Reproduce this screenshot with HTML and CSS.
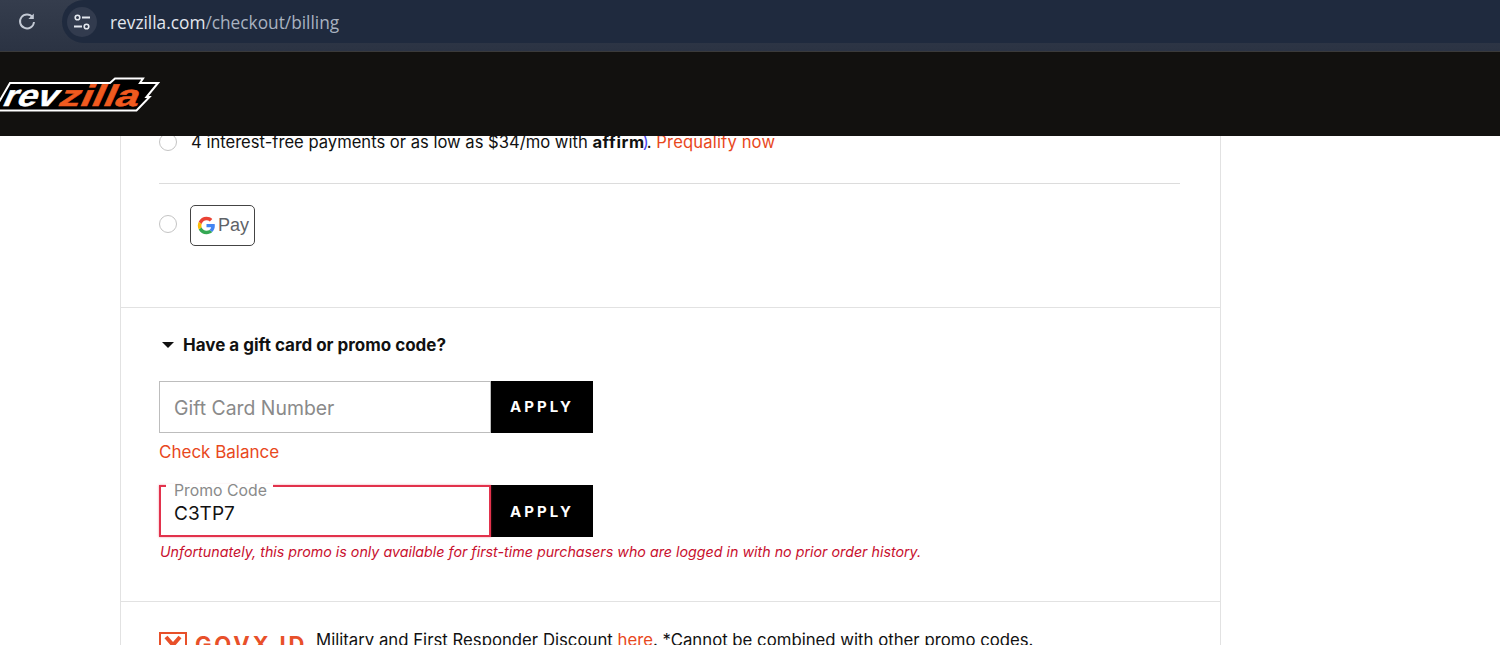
FILE: index.html
```html
<!DOCTYPE html>
<html lang="en">
<head>
<meta charset="utf-8">
<title>RevZilla checkout billing</title>
<link rel="stylesheet" href="styles.css">
</head>
<body>
<div class="browser-bar">
  <svg class="reload" viewBox="0 0 20 20" width="20" height="20"><path d="M15.6 6.200A7 7 0 1 0 17 11" fill="none" stroke="#c3c9d4" stroke-width="1.900"/><path d="M16.800 2.600v5.400h-5.400z" fill="#c3c9d4"/></svg>
  <div class="omnibox">
    <span class="site-info">
      <svg viewBox="0 0 20 20" width="20" height="20"><circle cx="5.500" cy="5.500" r="2.300" fill="none" stroke="#e4e8ef" stroke-width="1.600"/><path d="M10 5.500h8M2 14.500h8" stroke="#e4e8ef" stroke-width="1.800"/><circle cx="14.500" cy="14.500" r="2.300" fill="none" stroke="#e4e8ef" stroke-width="1.600"/></svg>
    </span>
    <span class="url"><span class="url-host">revzilla.com</span>/checkout/billing</span>
  </div>
</div>

<header class="site-header">
  <svg class="logo" viewBox="0 0 160 36" width="160" height="36">
    <polygon class="logo-outline" points="-6,33.500 10,6 110,6 115,1.500 143,1.500 140,6 158,6 146.500,20 149.500,20 136.500,33.500"/>
    <text class="logo-rev" transform="translate(1 28.500) skewX(-24)" textLength="54" lengthAdjust="spacingAndGlyphs">rev</text>
    <text class="logo-zilla" transform="translate(57 28.500) skewX(-24)" textLength="79" lengthAdjust="spacingAndGlyphs">zilla</text>
  </svg>
</header>

<main class="card">
  <section class="payment">
    <div class="pay-row pay-row-first">
      <span class="radio"></span>
      <p class="pay-text">4 interest-free payments or as low as $34/mo with <b class="affirm">affirm</b><span class="affirm-arc">)</span>. <a class="link prequalify">Prequalify now</a></p>
    </div>
    <hr class="rule">
    <div class="pay-row pay-row-gpay">
      <span class="radio radio-gpay"></span>
      <span class="gpay">
        <svg viewBox="0 0 48 48" width="19" height="19"><path fill="#4285f4" d="M45 24.500c0-1.600-.1-3-.4-4.500H24v8.500h11.800c-.5 2.700-2 5-4.400 6.600l7 5.400C42.500 36.700 45 31.100 45 24.500z"/><path fill="#34a853" d="M24 46c5.900 0 10.900-2 14.500-5.400l-7-5.400c-2 1.300-4.500 2.100-7.500 2.100-5.700 0-10.600-3.900-12.300-9.100l-7.300 5.600C7.900 41 15.400 46 24 46z"/><path fill="#fbbc05" d="M11.700 28.700c-.9-2.700-.9-5.600 0-8.400l-7.300-5.600c-3.100 6.100-3.100 13.400 0 19.600z"/><path fill="#ea4335" d="M24 10.800c3.200 0 6.100 1.100 8.400 3.300l6.300-6.300C34.900 4.200 29.900 2 24 2 15.400 2 7.900 7 4.400 14.700l7.300 5.600c1.700-5.300 6.600-9.500 12.300-9.500z"/></svg>
        <span class="gpay-text">Pay</span>
      </span>
    </div>
  </section>

  <section class="promo">
    <div class="promo-title"><span class="caret"></span>Have a gift card or promo code?</div>
    <div class="field-row">
      <div class="field"><span class="placeholder">Gift Card Number</span></div>
      <button class="apply">APPLY</button>
    </div>
    <a class="link check-balance">Check Balance</a>
    <div class="field-row">
      <div class="field field-error">
        <span class="float-label">Promo Code</span>
        <span class="value">C3TP7</span>
      </div>
      <button class="apply apply-promo">APPLY</button>
    </div>
    <p class="error-text">Unfortunately, this promo is only available for first-time purchasers who are logged in with no prior order history.</p>
  </section>

  <section class="govx">
    <span class="govx-mark">
      <svg viewBox="0 0 28 28" width="28" height="28"><rect x="1" y="1" width="26" height="26" fill="none" stroke="#e8502a" stroke-width="2"/><path d="M7 5l14 16M21 5L7 21" stroke="#e8502a" stroke-width="4"/></svg>
    </span>
    <span class="govx-name">GOVX ID</span>
    <span class="govx-text">Military and First Responder Discount <a class="link">here</a>. *Cannot be combined with other promo codes.</span>
  </section>
</main>
</body>
</html>
```

FILE: styles.css
```css
* { box-sizing: border-box; }

html, body {
  margin: 0;
  height: 100%;
  overflow: hidden;
  background: #fff;
}

body {
  font-family: "Inter", "Liberation Sans", sans-serif;
  color: #111;
}

.browser-bar {
  height: 52px;
  display: flex;
  align-items: flex-start;
  background: linear-gradient(#353d4d, #2b3343);
  border-bottom: 1px solid #3a3a3a;
}

.reload {
  margin: 11px 0 0 17px;
  flex: none;
}

.omnibox {
  flex: 1;
  height: 43px;
  margin-left: 25px;
  padding-left: 5px;
  display: flex;
  align-items: center;
  background: #1f2a3e;
  border-radius: 22px 0 0 22px;
}

.site-info {
  width: 30px;
  height: 30px;
  display: flex;
  align-items: center;
  justify-content: center;
  border-radius: 50%;
  background: #323b4e;
}

.url {
  margin-left: 13px;
  padding-top: 1px;
  font-family: "Open Sans", sans-serif;
  font-size: 17.3px;
  color: #a9b2c0;
}

.url-host { color: #e3e7ee; }

.site-header {
  position: relative;
  z-index: 2;
  height: 84px;
  background: #12110f;
  display: flex;
  align-items: flex-start;
  padding-top: 25px;
}

.logo { display: block; }

.logo-outline {
  fill: #000;
  stroke: #fff;
  stroke-width: 2;
}

.logo-rev, .logo-zilla {
  font-family: "Liberation Sans", sans-serif;
  font-weight: 700;
  font-size: 30px;
  stroke-width: .5;
}

.logo-rev { fill: #fff; stroke: #fff; }
.logo-zilla { fill: #f15a1f; stroke: #f15a1f; }

.card {
  width: 1101px;
  margin-left: 120px;
  margin-top: -6px;
  border-left: 1px solid #e2e2e2;
  border-right: 1px solid #e2e2e2;
}

.payment {
  padding: 0 40px 0 38px;
  height: 178px;
  border-bottom: 1px solid #e2e2e2;
}

.pay-row {
  display: flex;
  align-items: flex-start;
}

.pay-row-first { height: 53px; }

.pay-row-gpay { padding-top: 21px; }

.radio {
  width: 18px;
  height: 18px;
  flex: none;
  margin-top: 3px;
  margin-right: 14px;
  border: 1px solid #c4c4c4;
  border-radius: 50%;
  background: #fff;
}

.radio-gpay {
  margin-top: 10px;
  margin-right: 13px;
}

.pay-text {
  margin: 0;
  font-size: 16.6px;
  line-height: 24px;
}

.affirm {
  font-weight: 700;
  letter-spacing: .6px;
}

.affirm-arc {
  margin: 0 -2px;
  color: #4a4af4;
}

.link { color: #e8481c; }

.prequalify { letter-spacing: .15px; }

.rule {
  margin: 0;
  border: 0;
  border-top: 1px solid #dcdcdc;
}

.gpay {
  width: 65px;
  height: 41px;
  padding-left: 1px;
  display: flex;
  align-items: center;
  justify-content: center;
  gap: 2px;
  border: 1.5px solid #444;
  border-radius: 5px;
}

.gpay-text {
  font-family: "Liberation Sans", sans-serif;
  font-size: 18px;
  color: #5f6368;
}

.promo {
  height: 294px;
  padding: 24px 0 0 38px;
  border-bottom: 1px solid #e2e2e2;
}

.promo-title {
  display: flex;
  align-items: center;
  height: 24px;
  padding-top: 1px;
  font-size: 17px;
  font-weight: 700;
  margin-bottom: 25px;
}

.caret {
  width: 0;
  height: 0;
  margin: 0 9px 0 3px;
  border-left: 6px solid transparent;
  border-right: 6px solid transparent;
  border-top: 6px solid #111;
}

.field-row {
  display: flex;
  width: 434px;
  height: 52px;
}

.field {
  position: relative;
  flex: 1;
  display: flex;
  align-items: center;
  padding-left: 14px;
  border: 1px solid #bdbdbd;
  font-size: 19px;
}

.placeholder {
  padding-top: 2px;
  font-size: 19.4px;
  color: #8a8a8a;
}

.field-error {
  border: 2px solid #e2324c;
  box-shadow: 0 0 2px rgba(226, 50, 76, .5);
  align-items: flex-end;
  padding-left: 13px;
  padding-bottom: 9px;
}

.float-label {
  position: absolute;
  left: 5px;
  top: -3px;
  padding: 0 6px 0 8px;
  background: #fff;
  font-size: 15.8px;
  line-height: 14px;
  color: #8a8a8a;
}

.value {
  line-height: 24px;
}

.apply {
  width: 102px;
  padding-bottom: 3px;
  border: 0;
  background: #000;
  color: #fff;
  font-family: inherit;
  font-size: 15px;
  font-weight: 700;
  letter-spacing: 3px;
}

.apply-promo { padding-bottom: 1px; }

.check-balance {
  display: block;
  height: 52px;
  padding-top: 7px;
  font-size: 17px;
  line-height: 24px;
}

.error-text {
  margin: 5px 0 0 1px;
  font-size: 14.28px;
  line-height: 20px;
  font-style: italic;
  color: #c8102e;
}

.govx {
  display: flex;
  align-items: flex-start;
  padding: 30px 0 0 38px;
}

.govx-mark {
  display: block;
  height: 28px;
  margin-right: 8px;
}

.govx-name {
  width: 121px;
  font-size: 22px;
  font-weight: 700;
  letter-spacing: 2.800px;
  line-height: 24px;
  color: #e8502a;
}

.govx-text {
  font-size: 16.75px;
  line-height: 20px;
  margin-top: -2px;
}
```
